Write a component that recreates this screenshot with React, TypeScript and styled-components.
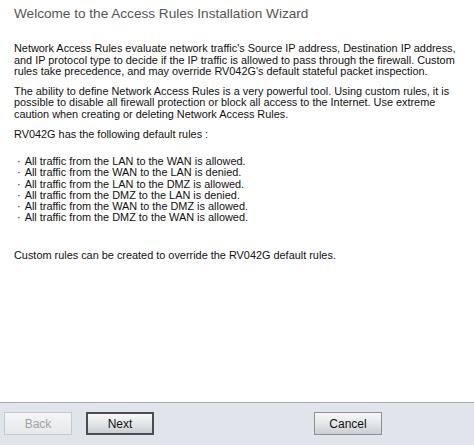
import React from "react";
import styled, { createGlobalStyle } from "styled-components";

const Global = createGlobalStyle`
  html, body { margin: 0; padding: 0; background: #ffffff; }
  body { width: 474px; height: 445px; overflow: hidden; font-family: "Liberation Sans", Arial, sans-serif; }
  #root { height: 100%; }
`;

const Page = styled.div`
  display: flex;
  flex-direction: column;
  height: 445px;
  width: 474px;
`;

const Content = styled.div`
  flex: 1;
  padding: 4px 0 0 14px;
`;

const Title = styled.h1`
  margin: 0 0 19px 0;
  font-size: 13.6px;
  font-weight: normal;
  color: #555;
  line-height: 20px;
`;

const Para = styled.p`
  margin: 0 0 8px 0;
  font-size: 10.9px;
  line-height: 11.6px;
  color: #111;
`;

const Line = styled.span`
  display: block;
  white-space: nowrap;
`;

const RuleList = styled.ul`
  list-style: none;
  margin: 16px 0 27px 0;
  padding: 0 0 0 3px;
  font-size: 10.9px;
  line-height: 11.2px;
  color: #111;
`;

const Rule = styled.li`
  &::before {
    content: "·";
    margin-right: 4px;
  }
`;

const Footer = styled.div`
  height: 43px;
  border-top: 1px solid #a8adb3;
  background: #dfe5eb;
  display: flex;
  align-items: flex-start;
  padding: 9px 0 0 4px;
  box-sizing: border-box;
`;

const Button = styled.button<{ $variant?: "disabled" | "primary" | "normal"; $ml?: number }>`
  width: 68px;
  height: 23px;
  margin-left: ${(p) => p.$ml ?? 0}px;
  font-family: "Liberation Sans", Arial, sans-serif;
  font-size: 12px;
  padding: 0;
  box-sizing: border-box;
  color: ${(p) => (p.$variant === "disabled" ? "#a0a4a8" : "#111")};
  border: ${(p) =>
    p.$variant === "primary"
      ? "2px solid #4a4e52"
      : p.$variant === "disabled"
      ? "1px solid #c4c9ce"
      : "1px solid #8a9096"};
  background: ${(p) =>
    p.$variant === "disabled"
      ? "linear-gradient(#f4f5f6, #e6e9ec)"
      : "linear-gradient(#f6f7f8 0%, #e4e7ea 50%, #c9ced3 100%)"};
`;

const rules = [
  "All traffic from the LAN to the WAN is allowed.",
  "All traffic from the WAN to the LAN is denied.",
  "All traffic from the LAN to the DMZ is allowed.",
  "All traffic from the DMZ to the LAN is denied.",
  "All traffic from the WAN to the DMZ is allowed.",
  "All traffic from the DMZ to the WAN is allowed.",
];

const intro = [
  "Network Access Rules evaluate network traffic's Source IP address, Destination IP address,",
  "and IP protocol type to decide if the IP traffic is allowed to pass through the firewall. Custom",
  "rules take precedence, and may override RV042G's default stateful packet inspection.",
];

const caution = [
  "The ability to define Network Access Rules is a very powerful tool. Using custom rules, it is",
  "possible to disable all firewall protection or block all access to the Internet. Use extreme",
  "caution when creating or deleting Network Access Rules.",
];

export default function App() {
  return (
    <Page>
      <Global />
      <Content>
        <Title>Welcome to the Access Rules Installation Wizard</Title>
        <Para>
          {intro.map((l) => (
            <Line key={l}>{l}</Line>
          ))}
        </Para>
        <Para>
          {caution.map((l) => (
            <Line key={l}>{l}</Line>
          ))}
        </Para>
        <Para>RV042G has the following default rules :</Para>
        <RuleList>
          {rules.map((r) => (
            <Rule key={r}>{r}</Rule>
          ))}
        </RuleList>
        <Para>Custom rules can be created to override the RV042G default rules.</Para>
      </Content>
      <Footer>
        <Button $variant="disabled" disabled>Back</Button>
        <Button $variant="primary" $ml={14}>Next</Button>
        <Button $variant="normal" $ml={160}>Cancel</Button>
      </Footer>
    </Page>
  );
}
